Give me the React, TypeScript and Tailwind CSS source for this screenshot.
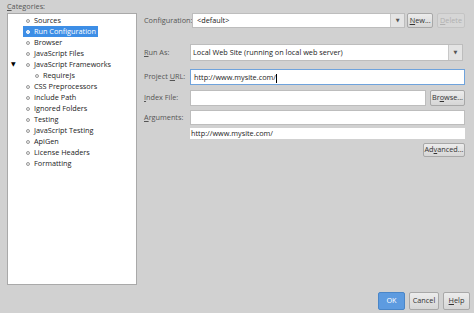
import React from 'react'

const font = { fontFamily: '"Open Sans", "DejaVu Sans", sans-serif' }

type Node = { label: string; depth: number; expanded?: boolean; selected?: boolean }

const nodes: Node[] = [
  { label: 'Sources', depth: 0 },
  { label: 'Run Configuration', depth: 0, selected: true },
  { label: 'Browser', depth: 0 },
  { label: 'JavaScript Files', depth: 0 },
  { label: 'JavaScript Frameworks', depth: 0, expanded: true },
  { label: 'RequireJs', depth: 1 },
  { label: 'CSS Preprocessors', depth: 0 },
  { label: 'Include Path', depth: 0 },
  { label: 'Ignored Folders', depth: 0 },
  { label: 'Testing', depth: 0 },
  { label: 'JavaScript Testing', depth: 0 },
  { label: 'ApiGen', depth: 0 },
  { label: 'License Headers', depth: 0 },
  { label: 'Formatting', depth: 0 },
]

function Bullet({ light }: { light?: boolean }) {
  return (
    <span
      className={`inline-block w-[4px] h-[4px] rounded-full border ${light ? 'border-white bg-[#cfe2f8]' : 'border-[#9a9a9a] bg-[#f0f0f0]'}`}
    />
  )
}

function TreeRow({ node }: { node: Node }) {
  return (
    <div className="relative flex items-center h-[11px]">
      {node.expanded && <span className="absolute left-[3px] top-[1px] text-[6px] leading-[9px] text-black">▼</span>}
      <div
        className={`flex items-center h-[11px] ${node.depth ? 'ml-[24px]' : 'ml-[15px]'} pr-[2px] ${node.selected ? 'bg-[#3d8ee6] text-white' : 'text-[#222]'}`}
      >
        <span className="w-[10px] flex justify-center">
          <Bullet light={node.selected} />
        </span>
        <span className="pl-[1px] text-[7.3px] leading-[11px] whitespace-nowrap">{node.label}</span>
      </div>
    </div>
  )
}

function U({ children }: { children: React.ReactNode }) {
  return <span className="underline underline-offset-[1px]">{children}</span>
}

function Btn({ children, w, disabled, primary }: { children: React.ReactNode; w: string; disabled?: boolean; primary?: boolean }) {
  return (
    <div
      className={`${w} flex items-center justify-center rounded-[2px] border text-[7.3px] leading-none whitespace-nowrap ${
        primary
          ? 'border-[#4a86c8] bg-[#5d9be0] text-white'
          : disabled
            ? 'border-[#c4c4c4] bg-[#d6d6d6] text-[#b0b0b0]'
            : 'border-[#a8a8a8] bg-gradient-to-b from-[#ececec] to-[#d6d6d6] text-[#333]'
      }`}
    >
      {children}
    </div>
  )
}

function Arrow() {
  return (
    <div className="w-[14px] flex items-center justify-center border-l border-[#c8c8c8] bg-[#e4e4e4]">
      <span className="text-[5px] leading-none text-[#555]">▼</span>
    </div>
  )
}

function Label({ children, className = '' }: { children?: React.ReactNode; className?: string }) {
  return <div className={`w-[46px] shrink-0 text-[7.3px] leading-none text-[#555] whitespace-nowrap ${className}`}>{children}</div>
}

export default function App() {
  return (
    <div className="w-[474px] h-[313px] bg-[#d1d1d1] flex flex-col overflow-hidden" style={font}>
      <div className="flex h-[285px]">
        <div className="pl-[7px] flex flex-col">
          <div className="h-[13px] pt-[2px] text-[7.3px] leading-[9px] text-[#555]">
            <U>C</U>ategories:
          </div>
          <div className="w-[130px] flex-1 bg-white border border-[#a9a9a9] pt-[1px]">
            {nodes.map((n) => (
              <TreeRow key={n.label} node={n} />
            ))}
          </div>
        </div>

        <div className="ml-[7px] w-[321px] flex flex-col pt-[13px]">
          <div className="flex items-center h-[15px]">
            <Label>Configuration:</Label>
            <div className="ml-[2px] w-[214px] h-[15px] flex bg-white border border-[#bdbdbd]">
              <div className="flex-1 pl-[4px] text-[7.3px] leading-[13px] text-[#222]">&lt;default&gt;</div>
              <Arrow />
            </div>
            <Btn w="ml-[2px] w-[26px] h-[15px]">
              <U>N</U>ew...
            </Btn>
            <Btn w="ml-[4px] w-[28px] h-[15px]" disabled>
              <U>D</U>elete
            </Btn>
          </div>

          <div className="flex items-center h-[17px] mt-[16px]">
            <Label>
              <U>R</U>un As:
            </Label>
            <div className="w-[273px] h-[17px] flex bg-white border border-[#bdbdbd]">
              <div className="flex-1 pl-[2px] text-[7.3px] leading-[15px] text-[#222] whitespace-nowrap">
                Local Web Site (running on local web server)
              </div>
              <Arrow />
            </div>
          </div>

          <div className="flex items-center h-[16px] mt-[8px]">
            <Label>
              Project <U>U</U>RL:
            </Label>
            <div className="w-[275px] h-[16px] bg-white border border-[#6fa3dc] pl-[3px] text-[7.3px] leading-[14px] text-[#222]">
              http://www.mysite.com/<span className="inline-block w-px h-[9px] bg-black align-middle" />
            </div>
          </div>

          <div className="flex items-center h-[16px] mt-[5px]">
            <Label>
              <U>I</U>ndex File:
            </Label>
            <div className="w-[236px] h-[16px] bg-white border border-[#bdbdbd]" />
            <Btn w="ml-[4px] w-[35px] h-[16px]">
              Br<U>o</U>wse...
            </Btn>
          </div>

          <div className="flex items-center h-[15px] mt-[4px]">
            <Label>
              <U>A</U>rguments:
            </Label>
            <div className="w-[275px] h-[15px] bg-white border border-[#bdbdbd]" />
          </div>

          <div className="flex items-center h-[11px] mt-[3px]">
            <Label />
            <div className="w-[275px] h-[11px] bg-white pl-[1px] text-[7.3px] leading-[11px] text-[#222]">http://www.mysite.com/</div>
          </div>

          <div className="flex justify-end h-[14px] mt-[4px]">
            <Btn w="w-[42px] h-[14px]">
              Ad<U>v</U>anced...
            </Btn>
          </div>
        </div>
      </div>

      <div className="flex justify-end pt-[7px] pr-[4px] gap-[4px]">
        <Btn w="w-[27px] h-[18px]" primary>
          OK
        </Btn>
        <Btn w="w-[30px] h-[18px]">Cancel</Btn>
        <Btn w="w-[27px] h-[18px]">
          <U>H</U>elp
        </Btn>
      </div>
    </div>
  )
}
